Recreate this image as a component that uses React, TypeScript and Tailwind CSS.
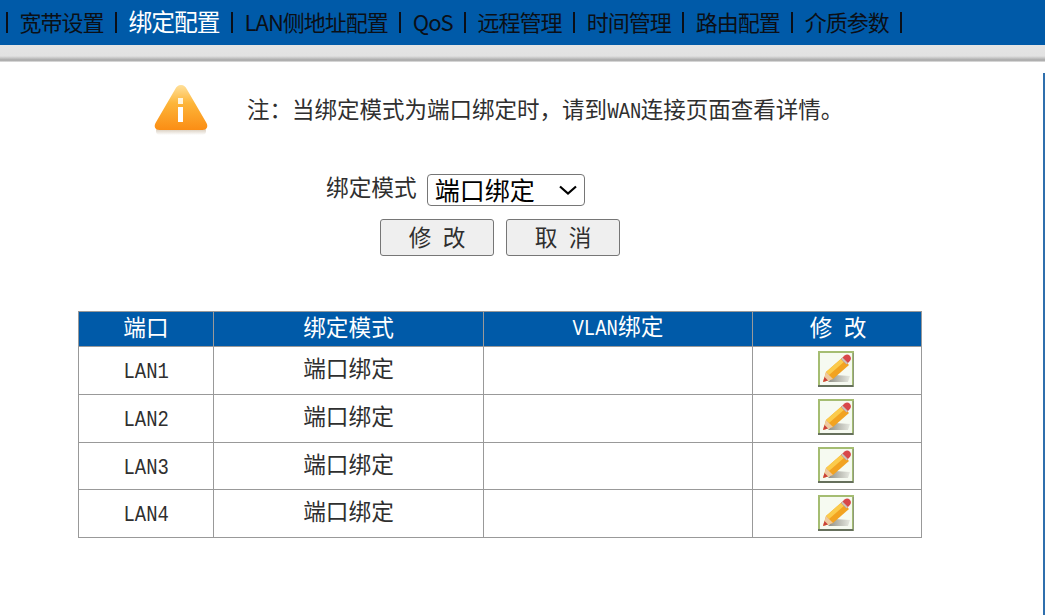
const NAV = ["宽带设置", "绑定配置", "LAN侧地址配置", "QoS", "远程管理", "时间管理", "路由配置", "介质参数"];
const PORTS = ["LAN1", "LAN2", "LAN3", "LAN4"];

function Latin({ children, margin }: { children: React.ReactNode; margin: string }) {
  return (
    <span className={`inline-block scale-x-[0.833] [font-family:'Liberation_Mono',monospace] ${margin}`}>{children}</span>
  );
}

function Gap() {
  return <span className="inline-block w-[11.33px]" />;
}

function InfoIcon() {
  return (
    <svg width="56" height="54" viewBox="0 0 56 54" className="block shrink-0">
      <defs>
        <linearGradient id="warn" x1="0" y1="0" x2="0" y2="1">
          <stop offset="0" stopColor="#ffe09a" />
          <stop offset="0.4" stopColor="#fdb63a" />
          <stop offset="1" stopColor="#fb8d14" />
        </linearGradient>
        <linearGradient id="shade" x1="0" y1="0" x2="0" y2="1">
          <stop offset="0" stopColor="#c9b9a3" />
          <stop offset="1" stopColor="#ffffff" />
        </linearGradient>
      </defs>
      <rect x="3" y="44" width="50" height="8" rx="4" fill="url(#shade)" />
      <path d="M28 2C25 2 23.500 3.500 22 6.500L2.500 40C.5 44 2.500 47 6.500 47L49.500 47C53.500 47 55.500 44 53.500 40L34 6.500C32.500 3.500 31 2 28 2Z" fill="url(#warn)" />
      <rect x="25" y="15" width="5" height="6" fill="#fff6df" />
      <rect x="25" y="24" width="5" height="15" fill="#ffffff" />
    </svg>
  );
}

function EditIcon() {
  return (
    <svg width="36" height="36" viewBox="0 0 36 36" className="block">
      <defs>
        <linearGradient id="pencilShadow" x1="0" y1="0" x2="1" y2="0">
          <stop offset="0" stopColor="#8f8f86" />
          <stop offset="1" stopColor="#e6e8e0" />
        </linearGradient>
      </defs>
      <rect x="1" y="1" width="34" height="34" fill="#f6faf1" stroke="#a5bd72" strokeWidth="2" />
      <path d="M0 34H36V36H0Z" fill="#66705c" />
      <path d="M35 2H36V36H35Z" fill="#8d9a7a" />
      <path d="M10 31L17 24L32 25L30 31Z" fill="url(#pencilShadow)" />
      <path d="M5 31L8 21L24 7L31 14L15 28Z" fill="#f2a321" />
      <path d="M8 21L24 7L27 10L11 24Z" fill="#fbcb4c" />
      <path d="M5 31L8 21L15 28Z" fill="#eec9a0" />
      <path d="M5 31L6.500 26L10 29.500Z" fill="#c9403a" />
      <path d="M23 8L26.500 4.500C28.200 3.200 30.300 3.200 31.800 4.700C33.300 6.300 33.300 8.300 31.900 10L28.500 13.500Z" fill="#d8474a" />
      <path d="M23 8L24.500 6.500L30 12L28.500 13.500Z" fill="#c9c4b8" />
    </svg>
  );
}

function Separator() {
  return <span className="inline-block w-[2px] h-[21px] bg-[#0a0f18] shrink-0" />;
}

function Cell({ children, width }: { children: React.ReactNode; width?: string }) {
  return <td className={`border border-[#999999] p-0 text-center align-middle ${width ?? ""}`}>{children}</td>;
}

export default function App() {
  return (
    <div className="h-[615px] w-[1045px] overflow-hidden bg-white flex flex-col">
      <nav className="h-[45px] bg-[#005aa8] flex items-center pl-[6px] gap-[11.5px] shrink-0 text-[22px] tracking-[-1px] text-[#0b0f16] [font-family:'Noto_Sans_CJK_SC','Liberation_Sans',sans-serif]">
        <Separator />
        {NAV.map((item, i) => (
          <div key={item} className="flex items-center gap-[11.5px]">
            <span className={i === 1 ? "text-white text-[23.75px] leading-[24px] -mt-[3px]" : "leading-[22px] -mt-[3px]"}>{item}</span>
            <Separator />
          </div>
        ))}
      </nav>
      <div className="h-[17px] shrink-0 bg-[linear-gradient(to_bottom,#e4e4e4_0px,#e2e2e2_11px,#a9a9a9_15px,#b5b5b5_16px,#f4f4f4_17px)]" />

      <main className="mt-[11px] flex-1 border-r-2 border-[#2f6fad] text-[22.67px] leading-[22px] text-[#2f2f2f] [font-family:'Noto_Sans_CJK_SC',sans-serif]">
        <section className="flex items-center pl-[153px] pt-[10px]">
          <InfoIcon />
          <p className="ml-[38px] text-[22.5px] whitespace-nowrap">注：当绑定模式为端口绑定时，请到<Latin margin="-mx-[3.4px]">WAN</Latin>连接页面查看详情。</p>
        </section>

        <section className="flex items-center pl-[326px] mt-[37px]">
          <label className="mb-[6px]">绑定模式</label>
          <div className="ml-[10px] w-[158px] h-[32px] rounded-[4px] border border-[#767676] bg-white flex items-center justify-between pl-[7px] pr-[6px] text-[25px] text-black">
            <span className="-mt-[2px]">端口绑定</span>
            <svg width="20" height="18" viewBox="0 0 20 18" fill="none" stroke="#000" strokeWidth="2.200">
              <path d="M2 5.500L10 12.500L18 5.500" />
            </svg>
          </div>
        </section>

        <section className="flex pl-[380px] gap-[12px] mt-[13px]">
          <button className="w-[114px] h-[37px] rounded-[3px] border border-[#767676] bg-[#efefef] pb-[2px]">修<Gap />改</button>
          <button className="w-[114px] h-[37px] rounded-[3px] border border-[#767676] bg-[#efefef] pb-[2px]">取<Gap />消</button>
        </section>

        <div className="pl-[78px] mt-[55px]">
          <table className="border-collapse table-fixed w-[844px]">
            <thead>
              <tr className="h-[35px] bg-[#005aa8] text-white">
                <Cell width="w-[135px]"><div className="pb-[4px]">端口</div></Cell>
                <Cell width="w-[270px]"><div className="pb-[4px]">绑定模式</div></Cell>
                <Cell width="w-[269px]"><div className="pb-[4px]"><Latin margin="-mx-[4.5px]">VLAN</Latin>绑定</div></Cell>
                <Cell><div className="pb-[4px] pl-[2px]">修<Gap />改</div></Cell>
              </tr>
            </thead>
            <tbody>
              {PORTS.map((port, i) => (
                <tr key={port} className={i === 2 ? "h-[47px]" : "h-[48px]"}>
                  <Cell><Latin margin="-mx-[4.5px]">{port}</Latin></Cell>
                  <Cell><div className={i === 2 ? "pb-[4px]" : "pb-[6px]"}>端口绑定</div></Cell>
                  <Cell>{""}</Cell>
                  <Cell>
                    <div className={i === 3 ? "flex justify-center pr-[2px] pb-[1px]" : "flex justify-center pr-[2px] pb-[3px]"}>
                      <EditIcon />
                    </div>
                  </Cell>
                </tr>
              ))}
            </tbody>
          </table>
        </div>
      </main>
    </div>
  );
}
